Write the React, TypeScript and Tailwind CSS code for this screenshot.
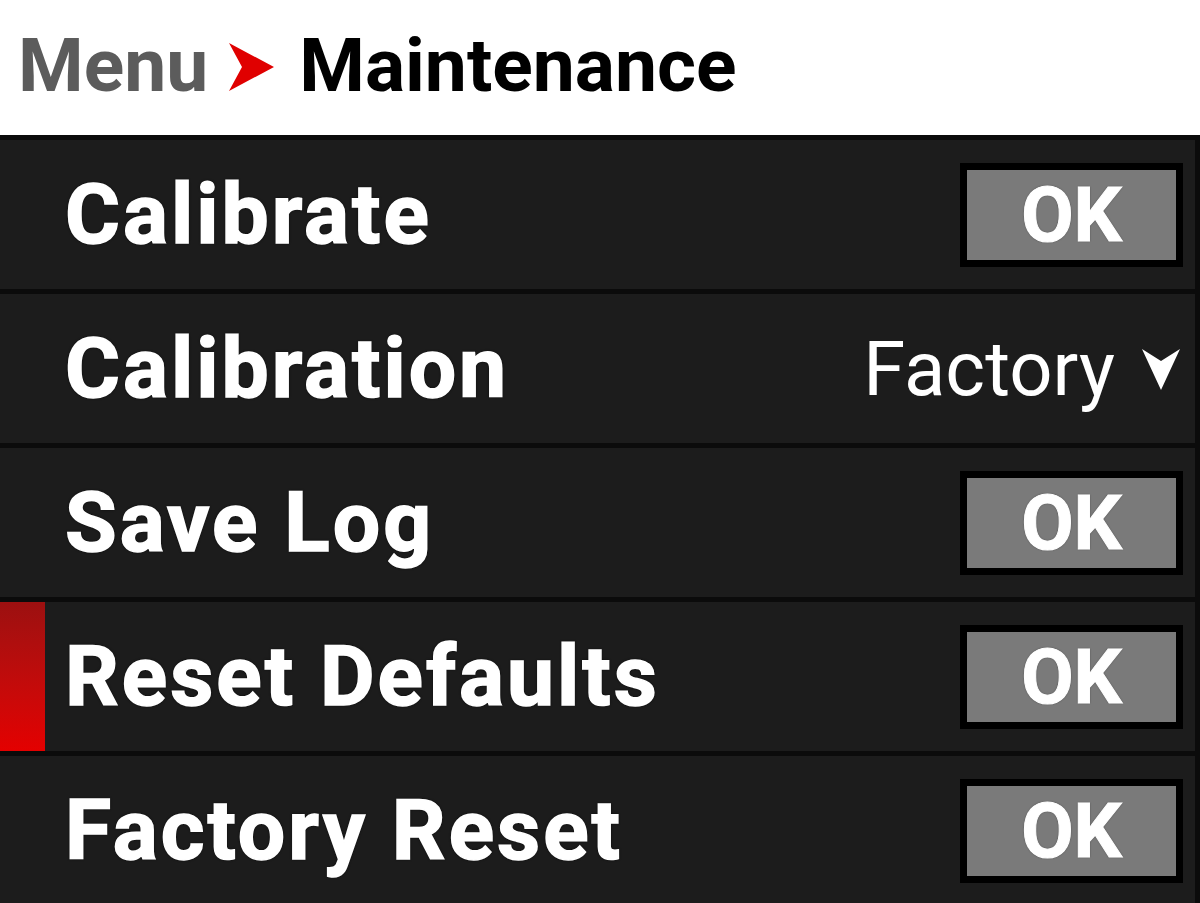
const rows = [
  { label: 'Calibrate', kind: 'button' },
  { label: 'Calibration', kind: 'select', value: 'Factory' },
  { label: 'Save Log', kind: 'button' },
  { label: 'Reset Defaults', kind: 'button', active: true },
  { label: 'Factory Reset', kind: 'button' },
];

function OkButton() {
  return (
    <div className="mr-[12px] bg-black p-[7px]">
      <div className="flex h-[90px] w-[209px] items-center justify-center bg-[#7a7a7a] text-[76px] font-bold leading-none text-white [-webkit-text-stroke:1px_#fff] [text-shadow:0_0_2px_#333]">
        OK
      </div>
    </div>
  );
}

export default function App() {
  return (
    <div className="h-[903px] w-[1200px] overflow-hidden bg-white font-['Roboto',sans-serif]">
      {/* Breadcrumb */}
      <div className="flex h-[135px] items-center pl-[18px] pb-[4px] text-[75px] font-bold leading-none">
        <span className="text-[#5c5c5c]">Menu</span>
        <svg width="48" height="50" viewBox="0 0 48 50" className="ml-[19px] mr-[24px] mt-[2px]">
          <path d="M2 1 L47 25 L2 49 L15 25 Z" fill="#e00000" />
        </svg>
        <span className="text-black">Maintenance</span>
      </div>

      {/* Menu list */}
      <div className="flex flex-col gap-[5px] border-t-[5px] border-r-[5px] border-[#0b0b0b] bg-[#0b0b0b]">
        {rows.map((row) => (
          <div key={row.label} className="flex h-[149px] shrink-0 items-center bg-[#1c1c1c]">
            <div
              className={
                row.active
                  ? 'h-full w-[45px] shrink-0 bg-gradient-to-b from-[#9c1010] to-[#e40000]'
                  : 'h-full w-[45px] shrink-0'
              }
            />
            <div className="ml-[20px] flex-1 text-[84px] font-bold leading-none tracking-[3px] text-white [-webkit-text-stroke:1.5px_#fff] [text-shadow:0_0_3px_#000]">
              {row.label}
            </div>
            {row.kind === 'button' ? (
              <OkButton />
            ) : (
              <div className="mr-[14px] flex items-center gap-[26px] text-white">
                <span className="text-[76px] leading-none">{row.value}</span>
                <svg width="40" height="44" viewBox="0 0 40 44">
                  <path d="M1 2 L20 14 L39 2 L20 43 Z" fill="#ffffff" />
                </svg>
              </div>
            )}
          </div>
        ))}
      </div>
    </div>
  );
}
